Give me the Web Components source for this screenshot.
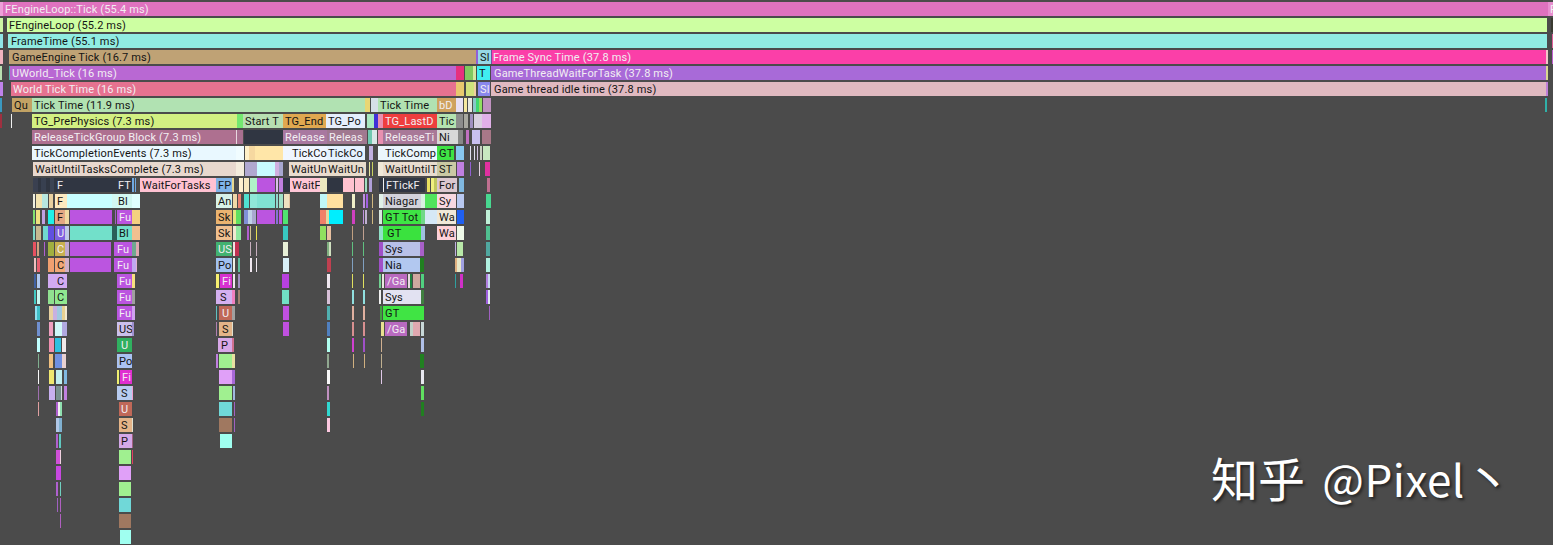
<!DOCTYPE html>
<html><head><meta charset="utf-8">
<style>
html,body{margin:0;padding:0;background:#4b4b4b;overflow:hidden}
</style></head><body>
<flame-graph id="g"></flame-graph>
<water-mark><span style="font-size:47px">知乎</span> <span style="font-size:44px;letter-spacing:.5px;margin-left:7px">@Pixel</span><span style="font-size:47px">丶</span></water-mark>
<script>
class FlameBar extends HTMLElement{
  constructor(){super();this.attachShadow({mode:'open'}).innerHTML=`<style>
  :host{display:block;flex:none;height:14px;overflow:hidden;box-sizing:border-box;white-space:nowrap;
    background:var(--c);width:var(--w);margin-left:var(--m);
    padding-left:var(--p,2px);font:11px/16px Roboto,sans-serif;letter-spacing:.16px;color:var(--t,#141414)}
  </style><slot></slot>`;}
}
class FlameRow extends HTMLElement{
  constructor(){super();this.attachShadow({mode:'open'}).innerHTML=`<style>
  :host{display:flex;height:14px;overflow:hidden}
  </style><slot></slot>`;}
}
class FlameGraph extends HTMLElement{
  constructor(){super();this.attachShadow({mode:'open'}).innerHTML=`<style>
  :host{display:flex;flex-direction:column;gap:2px;padding-top:2px;width:1553px;height:543px;overflow:hidden;background:#4b4b4b}
  </style><slot></slot>`;}
}
class WaterMark extends HTMLElement{
  constructor(){super();this.attachShadow({mode:'open'}).innerHTML=`<style>
  :host{position:absolute;left:1211px;top:445px;color:#fff;white-space:nowrap;
   font:46px/64px "Noto Sans CJK SC",sans-serif;text-shadow:2px 2px 3px rgba(0,0,0,.55)}
  </style><slot></slot>`;}
}
customElements.define('flame-bar',FlameBar);
customElements.define('flame-row',FlameRow);
customElements.define('flame-graph',FlameGraph);
customElements.define('water-mark',WaterMark);

const W='#f2eef2',P='#bb55e0',DK='#303642';
const rows=[
/*0*/[[0,3,'#eda0d8'],[3,1548,'#df72bf','FEngineLoop::Tick (55.4 ms)',W],[1548,1553,'#e88fd0','F',W]],
/*1*/[[0,3,'#cdf5a5'],[7,1547,'#cdffa2','FEngineLoop (55.2 ms)'],[1551,1553,'#3a3a30']],
/*2*/[[0,3,'#90e6e8'],[8,1547,'#90ece2','FrameTime (55.1 ms)',null,3],[1552,1553,'#e0609a']],
/*3*/[[0,3,'#f0b4c0'],[9,476,'#bfa275','GameEngine Tick (16.7 ms)',null,3],[476,478,'#9060d8'],[478,491,'#96d8e6','Sl'],[491,492,'#7050a0'],[492,1546,'#fb3fa8','Frame Sync Time (37.8 ms)',W,1],[1546,1548,'#f0c8c8'],[1552,1553,'#c060d0']],
/*4*/[[0,2,'#b8e0b0'],[9,10,'#50b0a8'],[10,456,'#b968d3','UWorld_Tick (16 ms)',W],[456,464,'#e6307e'],[465,473,'#80c860'],[473,476,'#d0e8a0'],[477,490,'#40eef0','T'],[491,1546,'#a86ad8','GameThreadWaitForTask (37.8 ms)',W,3],[1546,1548,'#d8d890']],
/*5*/[[0,3,'#c082ea'],[11,456,'#e67290','World Tick Time (16 ms)',W],[456,464,'#e8c96e'],[466,474,'#d0e27c'],[474,476,'#f0d0a0'],[478,490,'#8a88ec','Sl',W],[491,1546,'#e0b9c0','Game thread idle time (37.8 ms)',null,3],[1546,1548,'#c080d8']],
/*6*/[[0,2,'#3a98c0'],[12,32,'#c2a264','Qu'],[32,365,'#b1e2b2','Tick Time (11.9 ms)'],[365,370,'#e8d674'],[371,378,'#d6dfe8'],[378,437,'#b1e2b2','Tick Time'],[437,456,'#cfa25e','bD',W],[456,463,'#e8e0f4'],[464,467,'#f6e8a0'],[468,472,'#e8e8e0'],[473,476,'#88c8c8'],[476,479,'#40d870'],[479,482,'#90e060'],[483,491,'#c092c0'],[1545,1547,'#30b0a8']],
/*7*/[[0,2,'#a03040'],[11,12,'#f0f0f0'],[32,237,'#d2f082','TG_PrePhysics (7.3 ms)'],[237,243,'#74e870'],[243,283,'#b8dfb2','Start T'],[283,326,'#e0a850','TG_End'],[326,365,'#e4eefc','TG_Po'],[367,374,'#a8e8c0'],[374,378,'#4030d8'],[378,383,'#e890b0'],[383,437,'#ee3e3e','TG_LastD',W],[437,456,'#b4e2b0','Tic'],[456,463,'#8c8c8c'],[464,468,'#a8a8a0'],[470,473,'#a090c0'],[474,482,'#d8d0e0'],[482,491,'#e0b0e8']],
/*8*/[[32,236,'#ae7090','ReleaseTickGroup Block (7.3 ms)',W],[236,237,'#e8d8e0'],[237,243,'#a87090'],[244,283,DK],[283,327,'#a878a0','Release',W],[327,367,'#a07890','Releas',W],[368,372,'#70c8b0'],[372,377,'#d8e8e8'],[378,383,'#e890b0'],[383,437,'#a87898','ReleaseTi',W],[437,458,'#d8d8d8','Ni'],[458,463,'#888'],[466,469,'#c070c0'],[472,480,'#c8c0f0'],[482,491,'#a87888']],
/*9*/[[32,236,'#e9f8ff','TickCompletionEvents (7.3 ms)'],[236,244,'#f0fcff'],[245,249,'#fff0c8'],[249,255,'#f6d8a0'],[255,283,'#ffe6a8'],[283,290,'#f0f6ff'],[290,327,'#f0f6ff','TickCo'],[327,365,'#e4f2ff','TickCo',null,1],[369,373,'#c0b0e0'],[378,437,'#eaf6fc','TickComp',null,7],[437,454,'#3ee444','GT'],[456,464,'#88c8f0'],[470,471,'#e0e0f0'],[474,475,'#e0e0f0'],[477,478,'#d0c0e0'],[480,482,'#c8d0c0'],[483,490,'#c8e8c0']],
/*10*/[[33,236,'#e8d8ce','WaitUntilTasksComplete (7.3 ms)'],[236,244,'#f4ecdc'],[245,257,'#b0a8d0'],[257,275,'#c8fbff'],[275,279,'#d0b0e0'],[279,283,'#a8a8d0'],[289,327,'#eadccf','WaitUn'],[327,366,'#e8dccc','WaitUn',null,1],[369,370,'#e8e8a0'],[372,373,'#c8d060'],[378,383,'#f0e8d8'],[383,437,'#e8dccf','WaitUntilT'],[437,456,'#cac9a4','ST'],[457,464,'#c080e0'],[470,471,'#9060d0'],[479,480,'#e0d0e0'],[485,490,'#e030a0']],
/*11*/[[33,38,'#3a4050'],[38,41,DK],[41,46,'#384050'],[46,50,DK],[50,54,'#3c4454'],[54,112,DK,'F',W,3],[112,132,DK,'FT',W,6],[132,134,'#70a8e0'],[135,136,'#70a8e0'],[140,216,'#ffc2d2','WaitForTasks'],[216,232,'#80b4e8','FP'],[232,234,'#e8d890'],[239,243,'#fff0d0'],[244,249,'#f8e8c0'],[250,257,'#b0f0c8'],[257,275,P],[276,278,'#d8c0e8'],[279,283,'#c080e0'],[283,290,DK],[290,320,'#ffc6d6','WaitF'],[320,327,'#ece8c0'],[327,343,DK],[343,354,'#ffc2d0'],[355,364,'#ffc2d0'],[365,367,'#a0e0c0'],[369,372,'#b0a0d8'],[379,383,DK],[383,384,'#f0f0f0'],[384,425,DK,'FTickF',W],[427,430,'#e8e060'],[431,434,'#f0f080'],[434,437,'#c0c860'],[437,457,'#dcc8d0','For'],[459,464,'#80b8e0'],[487,490,'#c07090']],
/*12*/[[33,35,'#f0f0e0'],[36,42,'#f4e4b0'],[42,48,'#b8e8e0'],[49,53,'#e8d0a0'],[55,67,'#fdeac0','F'],[67,112,'#c8ffff'],[112,132,'#d2f8f2','Bl',null,6],[132,140,'#e0ffff'],[216,232,'#d8f2e8','An'],[233,237,'#f0d8a8'],[238,241,'#e88070'],[244,249,'#50e0d0'],[250,257,'#90e8d8'],[257,275,'#80e2d2'],[276,278,'#90d8d0'],[279,283,'#a0e0c8'],[284,289,'#f0e0c0'],[289,290,'#e0c0a0'],[320,327,'#c0f8f8'],[327,343,'#ffe0a0'],[352,355,'#f0f0c8'],[363,365,'#c090e0'],[366,368,'#a060e0'],[372,373,'#d0b880'],[379,383,'#e0f0e8'],[383,421,'#d2d2da','Niagar'],[421,425,'#d8f0e0'],[425,437,'#50e45c'],[437,456,'#f8d8e0','Sy'],[457,464,'#b8c8f0'],[486,491,'#48d890']],
/*13*/[[33,35,'#80e070'],[36,40,'#f0e080'],[42,45,'#c0a0e0'],[48,54,'#20f0e8'],[55,65,'#e4a884','F'],[65,69,'#f0d8a0'],[70,112,P],[115,116,'#a060c0'],[117,132,P,'Fu',W],[132,140,'#f4d080'],[216,232,'#ebb470','Sk'],[233,236,'#e0e880'],[236,241,'#60e060'],[244,248,'#8090d8'],[248,252,'#c0d0e8'],[252,256,'#a8a8d0'],[257,275,P],[276,278,'#8870d8'],[279,282,P],[283,288,'#50e470'],[320,326,'#f08068'],[326,329,'#e0d8a0'],[329,343,'#00eefe'],[352,355,'#d040c0'],[363,364,'#c090e0'],[365,367,'#c0b0d0'],[372,373,'#d0b880'],[379,382,'#d8e8e0'],[383,421,'#3ee444','GT Tot'],[421,425,'#70d888'],[425,437,'#d6e8f6'],[437,456,'#f0e8d8','Wa'],[457,464,'#2060f0'],[486,490,'#c0f0d8']],
/*14*/[[33,35,'#80d8c8'],[36,41,'#c8b890'],[43,48,'#70d8d0'],[48,54,'#6050e0'],[55,65,'#8060e0','U',W],[65,69,'#c0c8e8'],[70,112,'#72e0ca'],[112,117,'#2a6058'],[117,132,'#72e0ca','Bl'],[132,140,'#f2c090'],[216,232,'#f0c090','Sk'],[233,236,'#f0e8d0'],[236,241,'#90e8a0'],[247,249,'#b060d0'],[250,251,'#d0c090'],[256,257,'#e8e050'],[283,288,'#38c8c0'],[320,326,'#90e060'],[327,331,'#e8c0a0'],[352,353,'#c0a080'],[363,364,'#c0a090'],[379,383,'#90e0c8'],[383,421,'#3ae23e','GT',null,4],[421,425,'#a0c0e0'],[437,456,'#fed0d8','Wa'],[457,464,'#eef8e8'],[486,490,'#50c090']],
/*15*/[[33,36,'#e85060'],[37,39,'#d0a080'],[44,45,'#b060d0'],[48,54,'#a0b040'],[55,65,'#c8b050','C',W],[65,69,'#c0a8d0'],[70,111,P],[114,132,P,'Fu',W,3],[132,136,'#70a890'],[136,139,'#e0a8b0'],[216,232,'#42b270','US',W],[233,235,'#f0e0e0'],[235,239,'#c03050'],[250,251,'#c8b0c0'],[256,257,'#c8b0c0'],[283,288,'#e8f0d8'],[327,329,'#80b080'],[329,331,'#d0e0c0'],[352,353,'#60c080'],[363,364,'#60c080'],[379,383,'#a050c8'],[383,420,'#b9c1e8','Sys'],[420,424,'#a860c8'],[455,456,'#c0b0e0'],[457,463,'#b8e8a8'],[486,490,'#50a8a0']],
/*16*/[[34,36,'#f0c0c0'],[37,40,'#e86070'],[48,54,'#f0a070'],[55,65,'#f0a878','C'],[65,69,'#d0b0c8'],[70,111,P],[114,132,P,'Fu',W,3],[132,136,'#c0a8f0'],[136,137,'#e0b0d0'],[216,232,'#a2c2f2','Po'],[233,235,'#f0f0e8'],[238,240,'#60c0a0'],[250,252,'#f0e8f0'],[256,257,'#f0e8f0'],[283,289,'#d8f0f8'],[327,331,'#c04050'],[352,353,'#80a0c0'],[363,364,'#80a0c0'],[379,383,'#a050c8'],[383,420,'#b2c8f0','Nia'],[420,424,'#208020'],[455,457,'#e0b080'],[457,461,'#e8e8c8'],[461,464,'#a0a0e0'],[486,490,'#b0f0e0']],
/*17*/[[34,36,'#4060a0'],[37,40,'#b0c8f0'],[48,67,'#d2aaf2','C',null,9],[117,132,P,'Fu',W],[132,135,'#f8e080'],[216,219,'#f8f070'],[220,232,'#d830d0','Fi',W],[233,235,'#f0e8f0'],[238,240,'#a090c0'],[282,289,'#b840e0'],[327,330,'#f0e8f0'],[352,353,'#e0e060'],[363,364,'#e0e060'],[379,381,'#70d090'],[382,384,'#e8e8e0'],[385,407,'#b96ac0','/Ga',W],[408,410,'#e8d8e0'],[410,412,'#208040'],[413,420,'#d0a8a0'],[421,424,'#50d080'],[455,456,'#30a0a0'],[460,463,'#d030c8'],[486,488,'#b080e0'],[488,490,'#c8d8f0']],
/*18*/[[34,36,'#40c8c0'],[37,40,'#c8f8f0'],[48,54,'#90e090'],[55,67,'#90e890','C'],[117,132,P,'Fu',W],[132,135,'#a0a0a0'],[216,232,'#d4b0f0','S',null,4],[232,235,'#f080c0'],[238,240,'#a08070'],[282,289,'#70e0c4'],[327,330,'#d8c0d8'],[352,354,'#90e0e0'],[363,365,'#90e0e0'],[379,381,'#f0f0f0'],[383,421,'#e2e2f2','Sys'],[421,424,'#408040'],[486,488,'#a060e0'],[488,490,'#e0e8f0']],
/*19*/[[35,37,'#90e0f0'],[37,40,'#40c0c8'],[49,53,'#e8d0a0'],[53,57,'#c8b0e0'],[57,62,'#a0c8e0'],[62,65,'#e8d090'],[65,67,'#f0e8d0'],[117,132,P,'Fu',W],[132,135,'#d0a0f0'],[216,217,'#60c0c0'],[219,232,'#c06858','U',W,3],[232,235,'#a0a0a0'],[283,289,'#c050e0'],[327,330,'#50b0b0'],[352,354,'#e0b0a0'],[363,365,'#e0b0a0'],[380,382,'#40a040'],[383,424,'#40e444','GT'],[489,490,'#a060c0']],
/*20*/[[37,40,'#7090d0'],[49,53,'#f0a0c0'],[55,62,'#d0f8f8'],[62,67,'#b0a8e0'],[117,132,'#ccc0ec','US'],[132,134,'#a090d0'],[216,217,'#b080b0'],[219,232,'#e4b488','S',null,3],[232,233,'#e0e0d0'],[283,289,'#c050e0'],[327,330,'#5080c0'],[352,354,'#d89090'],[363,365,'#d89090'],[381,384,'#e8e090'],[385,407,'#b96ac0','/Ga',W],[410,413,'#c0d0c8'],[413,420,'#e0a8b0'],[421,424,'#c8d8d8']],
/*21*/[[37,40,'#c0ffff'],[49,54,'#f090b0'],[55,61,'#30c0e0'],[62,66,'#f0e8e8'],[117,132,'#30b060','U',W,4],[218,232,'#d8a8e8','P',null,3],[232,234,'#d07090'],[327,330,'#b0fff0'],[352,354,'#d040d0'],[363,365,'#a050c8'],[381,382,'#d0b090'],[421,424,'#b0c0e8']],
/*22*/[[38,39,'#80b090'],[49,53,'#f0c080'],[55,62,'#7090e0'],[62,66,'#e8d0d0'],[117,132,'#aac2f2','Po'],[216,218,'#c080e0'],[219,232,'#a0f090'],[232,235,'#e8e0a0'],[327,329,'#90a890'],[353,354,'#d0b080'],[364,365,'#d0b080'],[381,382,'#c0b090'],[420,424,'#208020']],
/*23*/[[38,39,'#f8f8f8'],[49,54,'#f0e870'],[56,62,'#c0f0f0'],[64,67,'#80b8e0'],[117,119,'#f0f070'],[120,132,'#e030d0','Fi',W],[219,232,'#e0a0f8'],[232,235,'#a868d8'],[327,330,'#f8f8f8'],[381,382,'#e0c8e8'],[421,424,'#e8e8f0']],
/*24*/[[38,39,'#a070b0'],[49,55,'#c8b0f0'],[56,61,'#789090'],[61,62,'#d0d8e0'],[64,67,'#c080e0'],[117,132,'#b8ccf0','S',null,4],[132,133,'#f0a0d0'],[219,232,'#a0f090'],[233,235,'#a0b8e0'],[327,329,'#c090c0'],[421,424,'#60e060']],
/*25*/[[38,39,'#e0a0a0'],[56,58,'#b060d0'],[58,60,'#f0f0f0'],[60,62,'#90e0b0'],[119,132,'#c06858','U',W,2],[219,232,'#70d8d8'],[234,235,'#a060c0'],[327,330,'#30d8d0'],[421,424,'#208020']],
/*26*/[[56,59,'#b0c8e8'],[59,62,'#80b0d0'],[119,132,'#e4b488','S',null,2],[132,133,'#e0e0d0'],[219,232,'#a07860'],[234,235,'#a060c0'],[327,330,'#fcc8e0']],
/*27*/[[56,58,'#b060d0'],[59,61,'#60c8c0'],[119,132,'#d4a8e8','P',null,2],[132,133,'#a06080'],[220,232,'#a0fff0']],
/*28*/[[56,60,'#d050d8'],[60,61,'#f0d0e0'],[119,131,'#a0f090'],[132,133,'#e04060']],
/*29*/[[56,61,'#c848e0'],[119,131,'#e0a0f8']],
/*30*/[[56,58,'#b060d0'],[60,61,'#70d0c0'],[119,131,'#a0f090']],
/*31*/[[57,58,'#a060c0'],[60,61,'#b060c0'],[119,131,'#70d8d8']],
/*32*/[[60,61,'#b060c0'],[119,131,'#a07860']],
/*33*/[[120,131,'#a0fff0']]
];
const g=document.getElementById('g');
for(const r of rows){
  const row=document.createElement('flame-row');
  let end=0;
  for(const [a,b,c,l,t,p] of r){
    const e=document.createElement('flame-bar');
    e.style.setProperty('--c',c);
    e.style.setProperty('--w',(b-a)+'px');
    e.style.setProperty('--m',(a-end)+'px');
    if(t)e.style.setProperty('--t',t);
    e.style.setProperty('--p',l?((p!=null?p:2)+'px'):'0');
    if(l)e.textContent=l;
    row.appendChild(e);
    end=b;
  }
  g.appendChild(row);
}
</script>
</body></html>
